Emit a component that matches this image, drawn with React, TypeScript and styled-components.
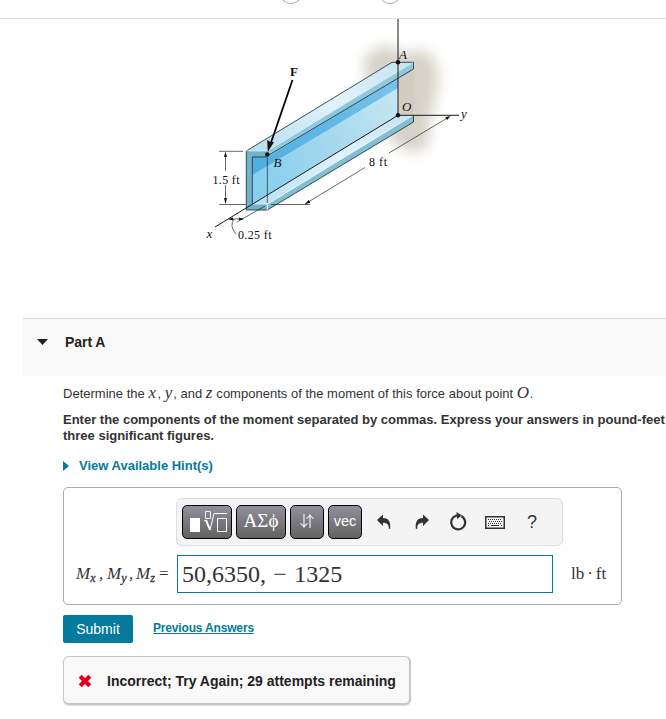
import React from 'react';
import styled, { createGlobalStyle } from 'styled-components';

const GlobalStyle = createGlobalStyle`
  *, *::before, *::after { box-sizing: border-box; }
  body { margin: 0; background: #fff; overflow: hidden; }
`;
const Page = styled.main`
  width: 666px; height: 719px; overflow: hidden;
  color: #333; font: 14px/16px "Liberation Sans", Arial, sans-serif;
`;
const TopBar = styled.header`
  height: 19px; border-bottom: 1px solid #dcdcdc;
  svg { display: block; }
`;
const FigureArea = styled.section`
  height: 299px; padding-left: 190px;
  svg { display: block; }
`;
const PartHeader = styled.section`
  margin-left: 23px; height: 58px; padding: 15px 0 0 14px;
  border-top: 1px solid #dcdcdc; background: #f9f9f9; color: #222;
  display: flex; align-items: flex-start;
`;
const PartTitle = styled.h2`
  margin: 0 0 0 17px; font-size: 14px; line-height: 16px; letter-spacing: -.05px;
`;
const Caret = styled.svg`
  display: block; width: 11px; height: 6px; margin-top: 5px;
`;
const Content = styled.section`margin-left: 63px; padding-top: 10px;`;
const Question = styled.p`
  margin: 0; height: 16px; white-space: nowrap; font-size: 13px; letter-spacing: .01px;
`;
const MathVar = styled.i<{ $width: number }>`
  display: inline-block; width: ${p => p.$width}px;
  font: italic 17px/14px "Liberation Serif", serif; letter-spacing: 0;
`;
const Instructions = styled.p`
  width: 603px; margin: 10px 0 0; font-size: 13px; font-weight: bold; white-space: nowrap;
`;
const InstructionLine = styled.span`display: block;`;
const HintLink = styled.button`
  display: flex; align-items: center; height: 16px; margin-top: 14px; padding: 0;
  border: 0; background: none; color: #047a9c; font: bold 13px/16px "Liberation Sans", sans-serif;
  gap: 10px;
  svg { width: 6px; height: 10px; }
`;
const AnswerPanel = styled.section`
  width: 559px; height: 118px; margin-top: 13px; padding-top: 10px;
  border: 1px solid #aaa; border-radius: 5px;
`;
const Toolbar = styled.div`
  width: 387px; height: 48px; margin-left: 112px; padding: 5px;
  display: flex; align-items: center; gap: 4px;
  border: 1px solid #ddd; border-radius: 6px; background: #f4f4f4;
`;
const ToolButton = styled.button<{ $width: number; $serif?: boolean }>`
  width: ${p => p.$width}px; height: 34px; padding: 0 0 2px; flex: none;
  display: flex; align-items: center; justify-content: center;
  border: 1px solid #000; border-radius: 5px; color: #fff;
  background: linear-gradient(#918e99, #636363);
  font: ${p => p.$serif ? '19px "Liberation Serif", serif' : '14.5px "Liberation Sans", sans-serif'};
`;
const IconButton = styled.button<{ $before: number; $width: number }>`
  width: ${p => p.$width}px; height: 34px; margin-left: ${p => p.$before}px; padding: 0; flex: none;
  display: flex; align-items: center; justify-content: center;
  border: 0; background: none; color: #333; font: 18px "Liberation Sans", sans-serif;
`;
const AnswerRow = styled.div`
  display: flex; align-items: center; height: 38px; margin-top: 9px;
`;
const AnswerLabel = styled.div`
  width: 101px; margin-left: 12px; flex: none; white-space: nowrap;
  font: 17px/20px "Liberation Serif", serif;
`;
const Symbol = styled.i<{ $width: number }>`
  display: inline-block; width: ${p => p.$width}px;
  sub { font-size: 12px; line-height: 0; vertical-align: -3px; -webkit-text-stroke: .3px #333; }
`;
const AnswerField = styled.div`
  width: 376px; height: 38px; padding: 0 4px; flex: none;
  border: 1px solid #047a9c; background: #fff;
  font: 24px/36px "Liberation Serif", serif; white-space: pre; word-spacing: 1.3px;
`;
const Unit = styled.span`
  margin-left: 18px; font: 17px/20px "Liberation Serif", serif; white-space: nowrap; word-spacing: -1.3px;
`;
const Actions = styled.div`
  display: flex; align-items: center; height: 28px; margin-top: 10px; gap: 20px;
`;
const Submit = styled.button`
  width: 70px; height: 28px; padding: 0; border: 0; border-radius: 2px;
  background: #047a9c; color: #fff; font: 14px/28px "Liberation Sans", sans-serif;
`;
const Previous = styled.a`
  color: #047a9c; font-size: 12px; font-weight: bold; line-height: 16px; text-decoration: underline;
  margin-top: -3px; letter-spacing: -.17px;
`;
const Feedback = styled.div`
  width: 348px; height: 49px; margin-top: 13px; padding: 1px 0 0 14px;
  display: flex; align-items: center; gap: 15px; color: #222; font-weight: bold;
  border: 1px solid #c7c7c7; border-right-width: 2px; border-bottom-width: 2px;
  border-radius: 6px; background: #f9f9f9; white-space: nowrap;
  box-shadow: 0 1px 1px #ddd;
`;

function BeamDiagram() {
  return (
    <svg width="290" height="281" viewBox="190 19 290 281" fontFamily="Liberation Serif, serif" fill="#111">
      <defs>
        <filter id="soft" x="-40%" y="-40%" width="180%" height="180%"><feGaussianBlur stdDeviation="7" /></filter>
        <linearGradient id="flange" x1="0" y1="1" x2="1" y2="0">
          <stop offset="0" stopColor="#b8dff0" /><stop offset=".55" stopColor="#e3f2fa" /><stop offset="1" stopColor="#c4e3f0" />
        </linearGradient>
        <linearGradient id="web" gradientUnits="userSpaceOnUse" x1="255" y1="180" x2="398" y2="100">
          <stop offset="0" stopColor="#87cfee" /><stop offset=".45" stopColor="#a0d6ed" /><stop offset="1" stopColor="#c5e6f2" />
        </linearGradient>
        <linearGradient id="shade" gradientUnits="userSpaceOnUse" x1="252" y1="170" x2="398" y2="85">
          <stop offset="0" stopColor="#4eaee1" /><stop offset=".6" stopColor="#65b9e6" /><stop offset="1" stopColor="#79c4eb" />
        </linearGradient>
      </defs>
      <path d="M364 60Q372 46 390 46L402 54L420 50Q440 55 438 80Q436 103 428 126Q433 143 422 151Q405 155 388 138L390 75L366 86Z" fill="#d6d2c7" filter="url(#soft)" />
      <path d="M399 69H414V118L399 114Z" fill="#cbc7b9" opacity=".5" />
      <path d="M252.3 157H267.3L398 77.5V115.3L252.3 204Z" fill="url(#web)" />
      <path d="M252.3 157H267.3L398 77.5V88L252.3 175Z" fill="url(#shade)" />
      <path d="M252.3 204L398 115.3H413.5L267.3 204.5Z" fill="url(#flange)" />
      <path d="M267.3 204.5L413.5 115.3V122L267.3 210Z" fill="#82bfd4" />
      <path d="M246.3 151L392 62.3H413.5L267.3 151Z" fill="url(#flange)" />
      <path d="M267.3 151L413.5 62.3V69L267.3 157Z" fill="#8fc8dc" />
      <path d="M246.3 151H267.3V157H252.3V204H267.3V210H246.3Z" fill="#71b2cc" />
      <path d="M246.3 151L392 62.3H413.5V69L267.3 156M246.3 151V210H267.3L413.5 122V115.3M267.3 157H252.3V204" fill="none" stroke="#1c3139" strokeWidth=".85" />
      <path d="M246.5 151H267.3L413 62.5" fill="none" stroke="#d9f0f7" strokeWidth=".7" />
      <path d="M252.3 204H267.3L413 115.3M267.3 204V210" fill="none" stroke="#ecf9fd" strokeWidth=".8" />
      <g stroke="#171717" strokeWidth=".8" fill="none">
        <path d="M398 19V115.3H459M398 115.3L215 227" strokeWidth="1" />
        <path d="M219 151.3H243M219 204.5H246M225.5 153V171M225.5 185V203M267.3 158V203" strokeWidth=".65" />
        <path d="M271 204.5H310M305 204L365 167.5M389 153L449 117M237 222L265 206M229 219H243M234 219Q229 226 236 234" strokeWidth=".65" />
        <path d="M292.5 80L269.5 147" stroke="#000" strokeWidth="1.8" />
      </g>
      <g fill="#111">
        <path d="M267.8 152L267.2 140L270.5 142L274 142Z" />
        <path d="M225.5 151.5L224 157H227ZM225.5 204L224 198H227ZM305 204L310.5 202.7L308.8 200ZM450.5 116L447 120L445.2 117.3ZM228 219L233 217.5V220.5ZM244 219L239 217.5V220.5Z" />
        <circle cx="267.3" cy="154.5" r="2.3" /><circle cx="398" cy="62.3" r="2.2" /><circle cx="398" cy="115.3" r="2.2" />
      </g>
      <g fontSize="12">
        <text x="290" y="76" fontSize="13" fontWeight="bold">F</text>
        <text x="212.5" y="184.2" textLength="27">1.5 ft</text>
        <text x="369" y="166.3" textLength="18">8 ft</text>
        <text x="238" y="239" textLength="33.5">0.25 ft</text>
        <g fontStyle="italic" fontSize="13">
          <text x="399" y="58.5">A</text><text x="402" y="111">O</text><text x="273.5" y="166.5">B</text>
          <text x="461" y="118">y</text><text x="206.5" y="238">x</text>
        </g>
      </g>
    </svg>
  );
}

const Undo = () => <svg width="14" height="16" viewBox="0 0 14 16"><path d="M0 6L6 .5V4C11 4 14 7 13.2 14.8H11.8C12 10.5 10 8.8 6 8.7V12Z" fill="#333" /></svg>;
const Redo = () => <svg width="14" height="16" viewBox="0 0 14 16"><path d="M14 6L8 .5V4C3 4 0 7 .8 14.8H2.2C2 10.5 4 8.8 8 8.7V12Z" fill="#333" /></svg>;

export default function App() {
  return (
    <><GlobalStyle /><Page>
      <TopBar><svg width="666" height="18" fill="white" stroke="#aaa"><circle cx="291" cy="-8" r="11.5" /><circle cx="390" cy="-8" r="11.5" /></svg></TopBar>
      <FigureArea><BeamDiagram /></FigureArea>
      <PartHeader><Caret viewBox="0 0 11 6"><path d="M0 0H11L5.5 6Z" fill="#222" /></Caret><PartTitle>Part A</PartTitle></PartHeader>
      <Content>
        <Question>Determine the <MathVar $width={9}>x</MathVar>, <MathVar $width={8.5}>y</MathVar>, and <MathVar $width={7}>z</MathVar> components of the moment of this force about point <MathVar $width={13}>O</MathVar>.</Question>
        <Instructions><InstructionLine>Enter the components of the moment separated by commas. Express your answers in pound-feet</InstructionLine><InstructionLine>three significant figures.</InstructionLine></Instructions>
        <HintLink><svg viewBox="0 0 6 10"><path d="M0 0L6 5L0 10Z" fill="#047a9c" /></svg>View Available Hint(s)</HintLink>
        <AnswerPanel>
          <Toolbar>
            <ToolButton $width={50} aria-label="Math templates"><svg width="40" height="24" viewBox="0 0 40 24" fill="none" stroke="white"><path d="M3 9H13V23H3Z" fill="white" stroke="none" /><path d="M18.5 2.5H23.5V9.5H18.5Z" strokeWidth=".9" /><path d="M17 12L19 11L23 21L27 4.5H40" /><path d="M19 11L23 21" strokeWidth="2" /><path d="M30.5 9.5H39.5V22.5H30.5Z" /></svg></ToolButton>
            <ToolButton $width={50} $serif>ΑΣϕ</ToolButton>
            <ToolButton $width={34} aria-label="Arrows"><svg width="14" height="16" viewBox="0 0 14 16" fill="none" stroke="#eee"><path d="M4 1V14M.5 10.5Q3 12 4 14Q5 12 7.5 10.5M10 15V2M6.5 5.5Q9 4 10 2Q11 4 13.5 5.5" strokeWidth="1.2" /></svg></ToolButton>
            <ToolButton $width={34}>vec</ToolButton>
            <IconButton $before={11} $width={14} aria-label="Undo"><Undo /></IconButton>
            <IconButton $before={20} $width={14} aria-label="Redo"><Redo /></IconButton>
            <IconButton $before={16} $width={18} aria-label="Reset"><svg width="18" height="20" viewBox="0 0 18 20" fill="none"><path d="M12.5 4.2A7 7 0 1 1 7 3.7L9 3.3" stroke="#333" strokeWidth="2.2" /><path d="M7.5 0L13 3.5L8 7Z" fill="#333" /></svg></IconButton>
            <IconButton $before={14} $width={20} aria-label="Keyboard"><svg width="20" height="13" viewBox="0 0 20 13" fill="none" stroke="#333"><rect x=".75" y=".75" width="18.5" height="11.5" strokeWidth="1.5" /><path d="M3 3.5H17M4 5.5H17M3 7.5H17" strokeDasharray="1 1" /><path d="M3 9.5H4M6 9.5H14M16 9.5H17" /></svg></IconButton>
            <IconButton $before={16} $width={14} aria-label="Help">?</IconButton>
          </Toolbar>
          <AnswerRow>
            <AnswerLabel><Symbol $width={23}>M<sub>x</sub></Symbol><Symbol $width={8}>,</Symbol><Symbol $width={22}>M<sub>y</sub></Symbol><Symbol $width={7}>,</Symbol><Symbol $width={23}>M<sub>z</sub></Symbol>=</AnswerLabel>
            <AnswerField>50,6350, − 1325</AnswerField><Unit>lb · ft</Unit>
          </AnswerRow>
        </AnswerPanel>
        <Actions><Submit>Submit</Submit><Previous>Previous Answers</Previous></Actions>
        <Feedback><svg width="14" height="14" viewBox="0 0 14 14"><path d="M2.2 2.2L11.8 11.8M11.8 2.2L2.2 11.8" stroke="#dc0020" strokeWidth="4.2" /></svg>Incorrect; Try Again; 29 attempts remaining</Feedback>
      </Content>
    </Page></>
  );
}
